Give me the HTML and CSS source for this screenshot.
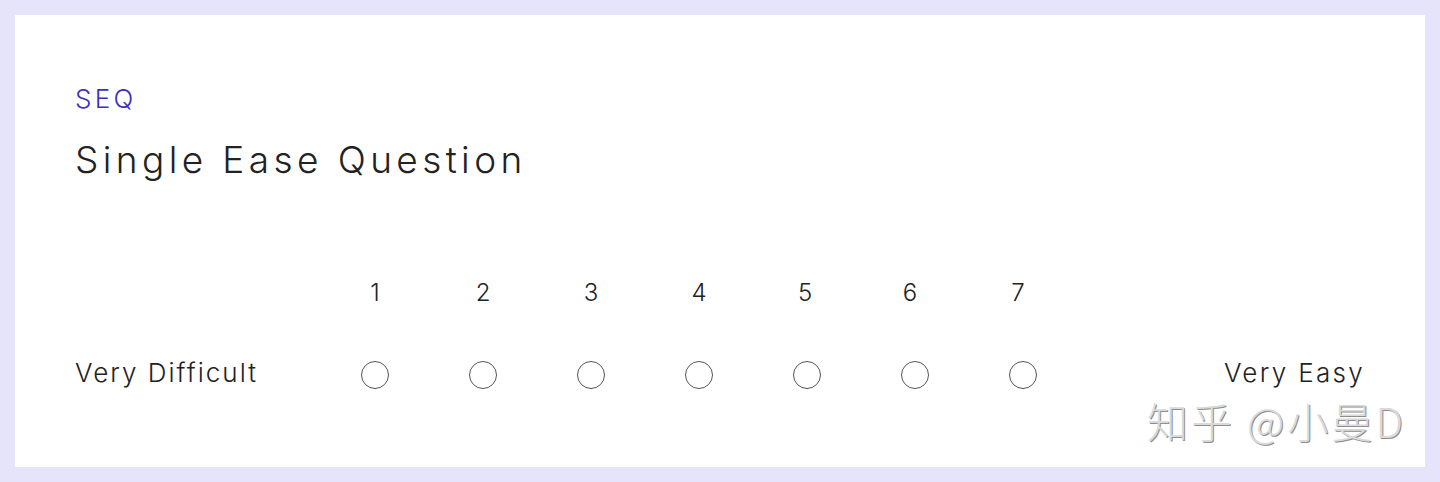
FILE: index.html
```html
<!DOCTYPE html>
<html lang="en">
<head>
<meta charset="utf-8">
<title>SEQ</title>
<link rel="stylesheet" href="styles.css">
</head>
<body>
<main class="card">
  <p class="eyebrow">SEQ</p>
  <h1 class="title">Single Ease Question</h1>
  <div class="scale">
    <span class="num n1">1</span>
    <span class="num n2">2</span>
    <span class="num n3">3</span>
    <span class="num n4">4</span>
    <span class="num n5">5</span>
    <span class="num n6">6</span>
    <span class="num n7">7</span>
    <span class="label left">Very Difficult</span>
    <span class="radio"></span>
    <span class="radio"></span>
    <span class="radio"></span>
    <span class="radio"></span>
    <span class="radio"></span>
    <span class="radio"></span>
    <span class="radio"></span>
    <span class="label right">Very Easy</span>
  </div>
  <div class="watermark">知乎 @小曼D</div>
</main>
</body>
</html>
```

FILE: styles.css
```css
html, body {
  margin: 0;
  padding: 0;
}
body {
  background: #e6e4fb;
  font-family: Inter, "Liberation Sans", "Noto Sans CJK SC", sans-serif;
  color: #222222;
}
.card {
  position: relative;
  margin: 15px;
  height: 452px;
  box-sizing: border-box;
  background: #ffffff;
  padding: 68px 60px 0 60px;
}
.eyebrow {
  margin: 0;
  font-size: 26px;
  line-height: 32px;
  letter-spacing: 3.3px;
  font-weight: 350;
  color: #3c2fbf;
}
.title {
  margin: 23px 0 0;
  font-size: 37px;
  line-height: 44px;
  font-weight: 350;
  letter-spacing: 4.4px;
  color: #222222;
}
.scale {
  margin-top: 96px;
  display: grid;
  grid-template-columns: 246px repeat(7, 108px) 1fr;
  grid-template-rows: 30px 40px;
  row-gap: 47px;
  align-items: center;
}
.num {
  grid-row: 1;
  font-size: 24px;
  line-height: 30px;
  font-weight: 350;
  text-align: center;
  color: #222222;
}
.n1 { grid-column: 2; }
.n2 { grid-column: 3; }
.n3 { grid-column: 4; }
.n4 { grid-column: 5; }
.n5 { grid-column: 6; margin-left: -4px; }
.n6 { grid-column: 7; margin-left: -10px; }
.n7 { grid-column: 8; margin-left: -10px; }
.label {
  grid-row: 2;
  font-size: 26px;
  line-height: 38px;
  margin-bottom: 5px;
  font-weight: 350;
  letter-spacing: 2px;
  color: #222222;
}
.label.left { grid-column: 1; }
.label.right { grid-column: 9; text-align: right; letter-spacing: 2.3px; }
.radio {
  grid-row: 2;
  justify-self: center;
  width: 28px;
  height: 28px;
  box-sizing: border-box;
  border: 1.3px solid #555555;
  border-radius: 50%;
}
.watermark {
  position: absolute;
  right: 22px;
  top: 381px;
  font-family: "Noto Sans CJK SC", sans-serif;
  font-size: 41px;
  line-height: 48px;
  font-weight: 300;
  letter-spacing: 3px;
  margin-right: -3px;
  color: #dadada;
  text-shadow: 1px 1px 0 #8e8e8e;
  white-space: nowrap;
}
```
